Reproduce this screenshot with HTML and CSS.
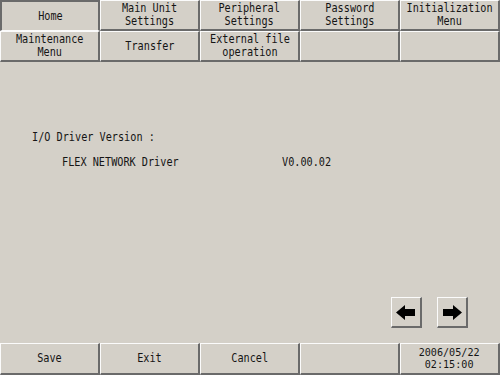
FILE: index.html
```html
<!DOCTYPE html>
<html>
<head>
<meta charset="utf-8">
<link rel="stylesheet" href="styles.css">
</head>
<body>
<div class="screen">
  <nav class="tabs">
    <div class="btn pressed"><span class="t">Home</span></div>
    <div class="btn"><span class="t">Main Unit<br>Settings</span></div>
    <div class="btn"><span class="t">Peripheral<br>Settings</span></div>
    <div class="btn"><span class="t">Password<br>Settings</span></div>
    <div class="btn"><span class="t">Initialization<br>Menu</span></div>
    <div class="btn"><span class="t">Maintenance<br>Menu</span></div>
    <div class="btn"><span class="t">Transfer</span></div>
    <div class="btn"><span class="t">External file<br>operation</span></div>
    <div class="btn"></div>
    <div class="btn"></div>
  </nav>
  <main class="content">
    <div class="info">
      <div class="line"><span class="tl">I/O Driver Version :</span></div>
      <div class="line sub">
        <span class="name"><span class="tl">FLEX NETWORK Driver</span></span>
        <span class="tl">V0.00.02</span>
      </div>
    </div>
    <div class="arrows">
      <div class="abtn">
        <svg width="20" height="15" viewBox="0 0 20 15"><polygon points="0,7.5 9,0 9,4 19,4 19,11 9,11 9,15" fill="#000"/></svg>
      </div>
      <div class="abtn">
        <svg width="20" height="15" viewBox="0 0 20 15"><polygon points="20,7.5 11,0 11,4 1,4 1,11 11,11 11,15" fill="#000"/></svg>
      </div>
    </div>
  </main>
  <footer class="bottom">
    <div class="btn"><span class="t">Save</span></div>
    <div class="btn"><span class="t">Exit</span></div>
    <div class="btn"><span class="t">Cancel</span></div>
    <div class="btn"></div>
    <div class="btn date"><span class="t">2006/05/22<br>02:15:00</span></div>
  </footer>
</div>
</body>
</html>
```
FILE: styles.css
```css
html, body {
  margin: 0;
  padding: 0;
  background: #d4d0c8;
}
.screen {
  width: 500px;
  height: 375px;
  display: flex;
  flex-direction: column;
  overflow: hidden;
  font-family: "DejaVu Sans Mono", "Liberation Mono", monospace;
  font-size: 12px;
  line-height: 13px;
  color: #151515;
}
.tabs {
  display: grid;
  grid-template-columns: repeat(5, 100px);
  grid-template-rows: 31px 31px;
}
.btn {
  box-sizing: border-box;
  display: flex;
  align-items: center;
  justify-content: center;
  text-align: center;
  background: #d4d0c8;
  border-top: 1px solid #fbfbfb;
  border-left: 1px solid #fbfbfb;
  border-right: 2px solid #6a6a6a;
  border-bottom: 2px solid #6a6a6a;
}
.btn.pressed {
  border-top: 2px solid #6a6a6a;
  border-left: 2px solid #6a6a6a;
  border-right: 2px solid #6a6a6a;
  border-bottom: 1px solid #fbfbfb;
}
.t {
  display: inline-block;
  white-space: nowrap;
  transform: scaleX(0.85);
}
.tl {
  display: inline-block;
  white-space: nowrap;
  transform: scaleX(0.85);
  transform-origin: left center;
}
.content {
  flex: 1;
  display: flex;
  flex-direction: column;
  padding: 69px 32px 15px 32px;
}
.info {
  display: flex;
  flex-direction: column;
  gap: 12px;
}
.line.sub {
  display: flex;
  padding-left: 30px;
}
.name {
  width: 220px;
}
.arrows {
  margin-top: auto;
  display: flex;
  justify-content: flex-end;
  gap: 15px;
}
.abtn {
  box-sizing: border-box;
  width: 31px;
  height: 31px;
  display: flex;
  align-items: center;
  justify-content: center;
  border-top: 1px solid #fbfbfb;
  border-left: 1px solid #fbfbfb;
  border-right: 2px solid #6a6a6a;
  border-bottom: 2px solid #6a6a6a;
}
.bottom {
  display: grid;
  grid-template-columns: repeat(5, 100px);
  height: 32px;
}
.date {
  font-size: 11px;
  line-height: 12px;
}
.date .t {
  transform: scaleX(0.92);
}
```
